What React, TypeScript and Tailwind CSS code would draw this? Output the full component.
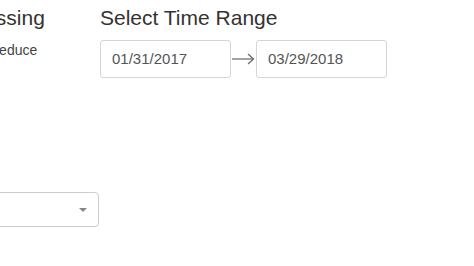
import React from "react";

const font = { fontFamily: '"Liberation Sans", Arial, sans-serif' };

function DateBox({ value }: { value: string }) {
    return (
        <div className="flex h-[38px] w-[131px] items-center rounded-[3px] border border-[#d5d5d5] bg-white pl-[11px] text-[15px] text-[#555]">
            {value}
        </div>
    );
}

export default function App() {
    return (
        <div style={font} className="relative h-[266px] w-[474px] overflow-hidden bg-white text-[#333]">
            <div className="flex -ml-[60px] pt-[6px]">
                {/* left column, mostly scrolled off */}
                <div className="flex w-[159px] flex-col">
                    <h3 className="pl-[1px] text-[21px] leading-[24px]">Processing</h3>
                    <div className="mt-[12px] pl-[49px] text-[14px] leading-[16px] text-[#444]">Reduce</div>
                    <div className="mt-[104px] pl-[55px] text-[12px] leading-[14px] text-[#5bc0de]">i</div>
                    <div className="mt-[16px] flex h-[35px] w-[159px] items-center justify-end rounded-[4px] border border-[#ccc] bg-white pr-[11px]">
                        <span className="h-0 w-0 border-x-[4px] border-t-[4px] border-x-transparent border-t-[#888]" />
                    </div>
                </div>
                {/* time range column */}
                <div className="ml-[1px] flex flex-col">
                    <h3 className="text-[21px] leading-[24px]">Select Time Range</h3>
                    <div className="mt-[10px] flex items-center">
                        <DateBox value="01/31/2017" />
                        <div className="flex w-[25px] justify-center">
                            <svg width="23" height="12" viewBox="0 0 23 12" fill="none" stroke="#666" strokeWidth="1.2">
                                <path d="M0 6 H21.5" />
                                <path d="M16 1 L21.5 6 L16 11" />
                            </svg>
                        </div>
                        <DateBox value="03/29/2018" />
                    </div>
                </div>
            </div>
        </div>
    );
}
